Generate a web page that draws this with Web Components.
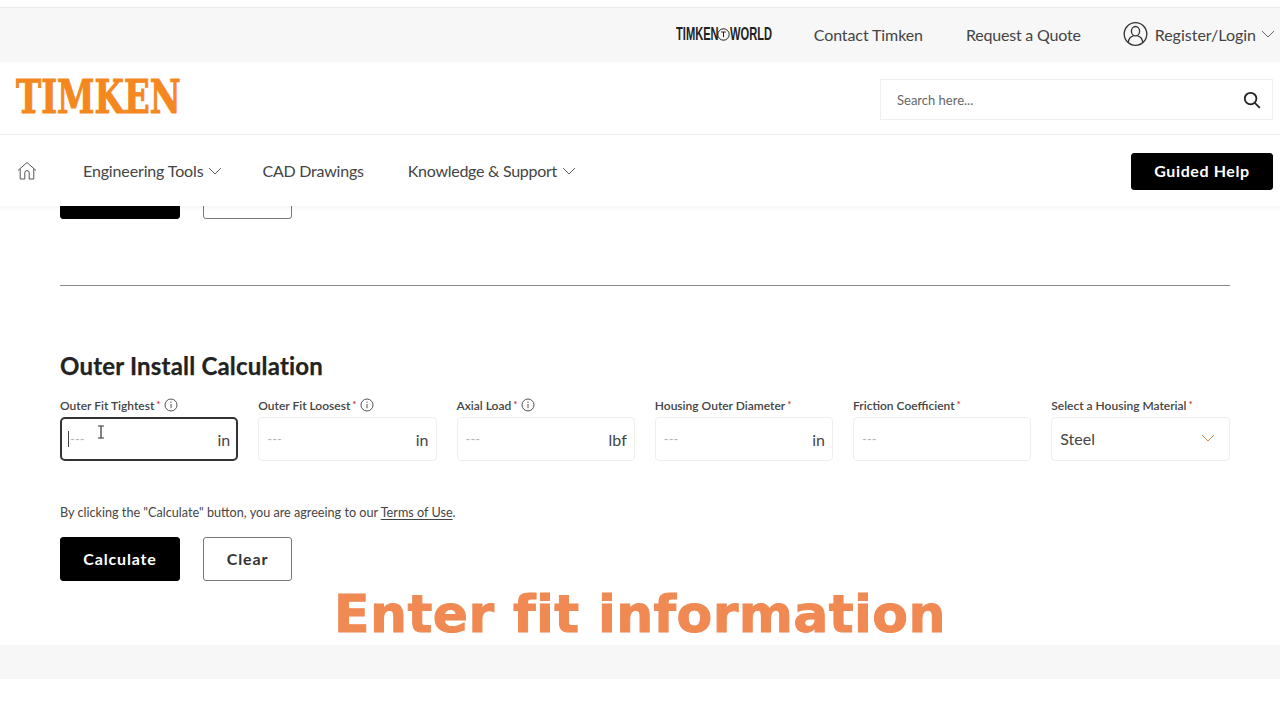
<!DOCTYPE html>
<html lang="en"><head><meta charset="utf-8"><title>Timken</title>
<style>
html,body{margin:0;padding:0;background:#fff;width:1280px;height:720px;overflow:hidden;font-family:Lato,"Liberation Sans",sans-serif;color:#333}
</style></head><body>

<tk-top></tk-top>
<tk-brand></tk-brand>
<tk-nav></tk-nav>
<tk-page>
  <tk-clip></tk-clip>
  <tk-rule></tk-rule>
  <tk-form></tk-form>
</tk-page>
<tk-band></tk-band>
<tk-caption>Enter fit information</tk-caption>

<script>
function def(name,html,init){customElements.define(name,class extends HTMLElement{constructor(){super();this.attachShadow({mode:'open'}).innerHTML=html;}connectedCallback(){if(init)init(this)}})}
const chev=(c)=>`<svg width="14" height="8" viewBox="0 0 14 8" fill="none" stroke="${c||'#666'}" stroke-width="1"><path d="M1 1l6 6 6-6"/></svg>`;

def('tk-btn',`<style>
:host{display:inline-flex;box-sizing:border-box;align-items:center;justify-content:center;height:44px;border-radius:3px;font:700 16px Lato,sans-serif;letter-spacing:.85px;background:#fff;color:#333;border:1px solid #777;padding-bottom:1px}
:host([dark]){background:#000;color:#fff;border-color:#000}
</style><slot></slot>`);

def('tk-top',`<style>
:host{display:block;padding-top:7px;background:#fff}
.bar{border-top:1px solid #e9e9e9;box-sizing:content-box;height:52px;padding:0 5px 2px 0;background:#f7f7f7;display:flex;align-items:center;justify-content:flex-end;font:16px Lato,sans-serif;color:#444}
.world{display:flex;align-items:center;width:95px;margin-right:43px;font:700 19px "Liberation Sans",sans-serif;color:#222}
.world span{display:inline-block;transform:scaleX(.585);transform-origin:left center;white-space:nowrap;flex:none}
.world svg{flex:none}
.l{margin-right:43px;letter-spacing:-.1px}
.user{display:flex;align-items:center;gap:7px}
.user svg.u{display:block}
</style><div class="bar">
<div class="world"><span style="width:41px">TIMKEN</span><svg width="13" height="13" viewBox="0 0 13 13" fill="none" stroke="#222"><circle cx="6.5" cy="6.5" r="5.7"/><path d="M4.2 4h4.6M6.5 4v5.2"/></svg><span style="width:41px">WORLD</span></div>
<div class="l">Contact Timken</div><div class="l" style="margin-right:42px;letter-spacing:-.2px">Request a Quote</div>
<div class="user"><svg class="u" width="25" height="26" viewBox="0 0 25 26" fill="none" stroke="#333" stroke-width="1.3"><circle cx="12.5" cy="13" r="11.3"/><ellipse cx="12.5" cy="10.2" rx="4.1" ry="4.7"/><path d="M5.2 21.4c.6-4 3.2-6 5-6.3M19.8 21.4c-.6-4-3.2-6-5-6.3"/></svg><span>Register/Login</span><span style="display:flex;margin-left:-2px">${chev()}</span></div>
</div>`);

def('tk-brand',`<style>
:host{display:flex;box-sizing:border-box;height:73px;background:#fff;align-items:center;justify-content:space-between;padding:0 7px 0 16px;border-bottom:1px solid #f2f2f2}
.logo{font:700 47px "DejaVu Serif",serif;color:#f5871f;line-height:1;transform-origin:left center;transform:scaleX(.72);white-space:nowrap;width:164px;margin-top:-3px;-webkit-text-stroke:1.1px #f5871f}
.s{box-sizing:border-box;width:393px;height:41px;border:1px solid #efefef;display:flex;align-items:center;justify-content:space-between;padding:0 11px 0 16px;font:13px Lato,sans-serif;color:#666;margin-top:3px}
svg{display:block}
</style><div class="logo">TIMKEN</div><div class="s"><span>Search here...</span><svg width="18" height="18" viewBox="0 0 18 18" fill="none" stroke="#222" stroke-width="1.8"><circle cx="7.6" cy="7.6" r="5.8"/><path d="M11.8 11.8l5 5"/></svg></div>`);

def('tk-nav',`<style>
:host{display:flex;position:relative;z-index:2;box-sizing:border-box;height:71px;background:#fff;align-items:center;padding:0 7px 0 17px;font:16px Lato,sans-serif;color:#444;letter-spacing:-.14px;box-shadow:0 2px 6px rgba(0,0,0,.05)}
svg.h{display:block;margin-right:46px}
.i{display:flex;align-items:center;gap:5px}
.sp{flex:1}
tk-btn{margin-top:2px;padding-bottom:2px}
</style><svg class="h" width="20" height="20" viewBox="0 0 20 20" fill="none" stroke="#555" stroke-width="1"><path d="M1 9.5L10 1.5l9 8M3.2 8v10h4.6v-6.2a2.2 2.2 0 0 1 4.4 0V18h4.6V8"/></svg>
<div class="i" style="margin-right:40px">Engineering Tools ${chev()}</div><div class="i" style="margin-right:44px;letter-spacing:-.22px">CAD Drawings</div><div class="i" style="letter-spacing:-.27px">Knowledge &amp; Support ${chev()}</div><div class="sp"></div><tk-btn dark style="width:142px;height:37px;letter-spacing:.6px">Guided Help</tk-btn>`);

def('tk-page',`<style>:host{display:block;padding:0 50px 0 60px}</style><slot></slot>`);

def('tk-clip',`<style>
:host{display:flex;height:13px;overflow:hidden;align-items:flex-end;gap:23px}
tk-btn{flex:none}
</style><tk-btn dark style="width:120px"></tk-btn><tk-btn style="width:89px"></tk-btn>`);

def('tk-rule',`<style>:host{display:block;height:1px;margin-top:66px;background:#8a8a8a}</style>`);

def('tk-field',`<style>
:host{display:block;min-width:0;position:relative}
.lab{display:flex;align-items:center;height:16px;margin-bottom:4px;font:600 12px Lato,sans-serif;color:#444;white-space:nowrap}
.lab i{font-style:normal;color:#c33;font-size:10px;margin:-3px 0 0 2px}
.lab svg{margin-left:3px;display:block}
.box{box-sizing:border-box;height:44px;border:1px solid #eee;border-radius:4px;display:flex;align-items:center;justify-content:space-between;padding:0 7px 0 8px;background:#fff}
.ph{font:13px Lato,sans-serif;color:#b5b5b5;letter-spacing:.1px;margin-bottom:1px}
.u{font:16px Lato,sans-serif;color:#444;margin-top:1px}
:host([focus]) .box{border:2px solid #333;border-radius:5px;padding:0 6px}
.caret{display:none;width:1px;height:16px;background:#444;margin-right:1px}
:host([focus]) .caret{display:block}
.l{display:flex;align-items:center}
.cur{display:none;position:absolute;left:36px;top:28px}
:host([focus]) .cur{display:block}
</style><div class="lab"><span class="n"></span><i>*</i><svg class="inf" width="14" height="14" viewBox="0 0 14 14" fill="none" stroke="#555"><circle cx="7" cy="7" r="6"/><path d="M7 6v4.2M7 3.6v1.2"/></svg></div>
<div class="box"><div class="l"><span class="caret"></span><span class="ph">---</span></div><span class="u"></span></div>
<svg class="cur" width="10" height="14" viewBox="0 0 10 14" fill="none" stroke="#333" stroke-width="1.2"><path d="M2 1h6M2 13h6M5 1v12"/></svg>`,
(el)=>{const s=el.shadowRoot;s.querySelector('.n').textContent=el.getAttribute('label');s.querySelector('.u').textContent=el.getAttribute('unit')||'';if(!el.hasAttribute('info'))s.querySelector('.inf').remove();});

def('tk-select',`<style>
:host{display:block;min-width:0}
.lab{display:flex;align-items:center;height:16px;margin-bottom:4px;font:600 12px Lato,sans-serif;color:#444;white-space:nowrap}
.lab i{font-style:normal;color:#c33;font-size:10px;margin:-3px 0 0 2px}
.box{box-sizing:border-box;height:44px;border:1px solid #eee;border-radius:4px;display:flex;align-items:center;justify-content:space-between;padding:0 14px 2px 8px;font:16px Lato,sans-serif;color:#444}
</style><div class="lab"><span>Select a Housing Material</span><i>*</i></div><div class="box"><span>Steel</span>${chev('#d98a4e')}</div>`);

def('tk-form',`<style>
:host{display:block;padding-top:65px}
h2{margin:0;font:700 24px/30px Lato,sans-serif;color:#222;letter-spacing:.2px;-webkit-text-stroke:.25px #222}
.g{display:grid;grid-template-columns:repeat(6,1fr);gap:20px;margin:16px .5px 0 0}
p{margin:43px 0 0;font:12.65px/18px Lato,sans-serif;color:#444}
u{text-underline-offset:2px}
.b{display:flex;gap:23px;margin-top:15px}
</style><h2>Outer Install Calculation</h2>
<div class="g">
<tk-field focus info label="Outer Fit Tightest" unit="in"></tk-field>
<tk-field info label="Outer Fit Loosest" unit="in"></tk-field>
<tk-field info label="Axial Load" unit="lbf"></tk-field>
<tk-field label="Housing Outer Diameter" unit="in"></tk-field>
<tk-field label="Friction Coefficient"></tk-field>
<tk-select></tk-select>
</div>
<p>By clicking the "Calculate" button, you are agreeing to our <u>Terms of Use</u>.</p>
<div class="b"><tk-btn dark style="width:120px">Calculate</tk-btn><tk-btn style="width:89px">Clear</tk-btn></div>`);

def('tk-band',`<style>:host{display:block;height:34px;margin-top:64px;background:#f7f7f7}</style>`);

def('tk-caption',`<style>
:host{position:absolute;left:0;right:0;top:583px;text-align:center;font:700 52px/62px "DejaVu Sans",sans-serif;color:#f08a52;letter-spacing:.4px;white-space:nowrap;-webkit-text-stroke:1px #ee8a56}
</style><slot></slot>`);
</script>
</body></html>
